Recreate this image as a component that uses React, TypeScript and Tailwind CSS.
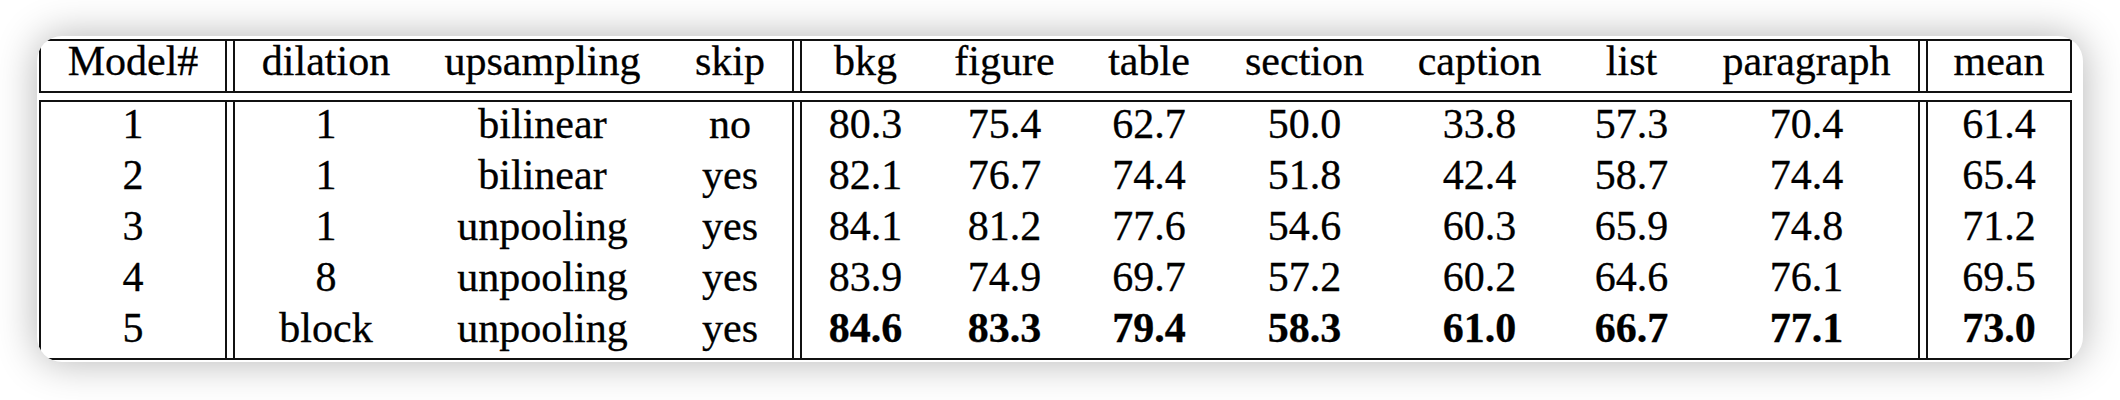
type Cell = { text: string; bold?: boolean };

const sec2 = [
  { head: "dilation", w: "w-[182px]" },
  { head: "upsampling", w: "w-[251px]" },
  { head: "skip", w: "w-[124px]" },
];

const sec3 = [
  { head: "bkg", w: "w-[127px]" },
  { head: "figure", w: "w-[151px]" },
  { head: "table", w: "w-[138px]" },
  { head: "section", w: "w-[173px]" },
  { head: "caption", w: "w-[177px]" },
  { head: "list", w: "w-[127px]" },
  { head: "paragraph", w: "w-[223px]" },
];

const rows: { model: string; conf: string[]; scores: string[]; mean: string; best?: boolean }[] = [
  { model: "1", conf: ["1", "bilinear", "no"], scores: ["80.3", "75.4", "62.7", "50.0", "33.8", "57.3", "70.4"], mean: "61.4" },
  { model: "2", conf: ["1", "bilinear", "yes"], scores: ["82.1", "76.7", "74.4", "51.8", "42.4", "58.7", "74.4"], mean: "65.4" },
  { model: "3", conf: ["1", "unpooling", "yes"], scores: ["84.1", "81.2", "77.6", "54.6", "60.3", "65.9", "74.8"], mean: "71.2" },
  { model: "4", conf: ["8", "unpooling", "yes"], scores: ["83.9", "74.9", "69.7", "57.2", "60.2", "64.6", "76.1"], mean: "69.5" },
  { model: "5", conf: ["block", "unpooling", "yes"], scores: ["84.6", "83.3", "79.4", "58.3", "61.0", "66.7", "77.1"], mean: "73.0", best: true },
];

function DoubleRule() {
  return (
    <div className="flex w-[10px] shrink-0 justify-between">
      <div className="w-[2px] bg-[#111]" />
      <div className="w-[2px] bg-[#111]" />
    </div>
  );
}

function HeadCell({ text, w }: { text: string; w: string }) {
  return <div className={`${w} shrink-0 text-center leading-[41px] whitespace-nowrap`}>{text}</div>;
}

function Column({ w, cells }: { w: string; cells: Cell[] }) {
  return (
    <div className={`${w} flex shrink-0 flex-col`}>
      {cells.map((c, i) => (
        <div key={i} className={`h-[51px] text-center leading-[44px] whitespace-nowrap ${c.bold ? "font-bold" : ""}`}>
          {c.text}
        </div>
      ))}
    </div>
  );
}

export default function App() {
  return (
    <div className="h-[400px] w-[2120px] bg-white pl-[37px] pt-[36px] font-['Liberation_Serif','Times_New_Roman',serif] text-[42px] text-black [-webkit-text-stroke:0.3px_black]">
      <div className="w-[2046px] overflow-hidden rounded-[25px] bg-white pb-[2px] pl-[2px] pr-[11px] pt-[3px] shadow-[0_0_40px_rgba(0,0,0,0.3)]">
        {/* header box */}
        <div className="flex h-[54px] w-[2033px] border-2 border-[#111]">
          <HeadCell text="Model#" w="w-[184px]" />
          <DoubleRule />
          {sec2.map((c) => (
            <HeadCell key={c.head} text={c.head} w={c.w} />
          ))}
          <DoubleRule />
          {sec3.map((c) => (
            <HeadCell key={c.head} text={c.head} w={c.w} />
          ))}
          <DoubleRule />
          <HeadCell text="mean" w="w-[142px]" />
        </div>

        {/* body box */}
        <div className="mt-[7px] flex h-[260px] w-[2033px] border-2 border-[#111]">
          <Column w="w-[184px]" cells={rows.map((r) => ({ text: r.model }))} />
          <DoubleRule />
          {sec2.map((c, ci) => (
            <Column key={c.head} w={c.w} cells={rows.map((r) => ({ text: r.conf[ci] }))} />
          ))}
          <DoubleRule />
          {sec3.map((c, ci) => (
            <Column key={c.head} w={c.w} cells={rows.map((r) => ({ text: r.scores[ci], bold: r.best }))} />
          ))}
          <DoubleRule />
          <Column w="w-[142px]" cells={rows.map((r) => ({ text: r.mean, bold: r.best }))} />
        </div>
      </div>
    </div>
  );
}
